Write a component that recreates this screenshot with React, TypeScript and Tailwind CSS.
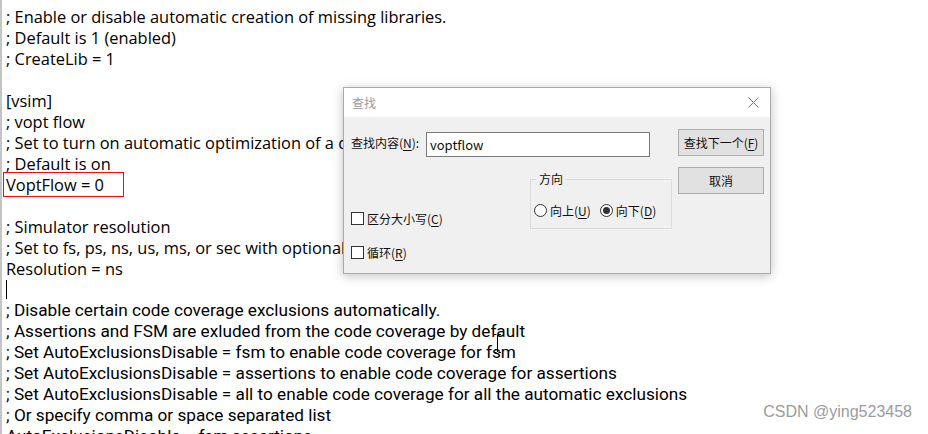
import React from "react";

const topLines = [
  "; Enable or disable automatic creation of missing libraries.",
  "; Default is 1 (enabled)",
  "; CreateLib = 1",
  "",
  "[vsim]",
  "; vopt flow",
  "; Set to turn on automatic optimization of a design.",
  "; Default is on",
];

const midLines = [
  "",
  "; Simulator resolution",
  "; Set to fs, ps, ns, us, ms, or sec with optional prefix of 1, 10, or 100.",
  "Resolution = ns",
];

const bottomLines = [
  "; Disable certain code coverage exclusions automatically.",
  "; Assertions and FSM are exluded from the code coverage by default",
  "; Set AutoExclusionsDisable = fsm to enable code coverage for fsm",
  "; Set AutoExclusionsDisable = assertions to enable code coverage for assertions",
  "; Set AutoExclusionsDisable = all to enable code coverage for all the automatic exclusions",
  "; Or specify comma or space separated list",
  "AutoExclusionsDisable = fsm,assertions",
];

function Line({ text }: { text: string }) {
  return <div className="h-[21px] leading-[21px] whitespace-pre">{text || " "}</div>;
}

function Key({ k }: { k: string }) {
  return <span className="underline underline-offset-2">{k}</span>;
}

function Checkbox({ label, k }: { label: string; k: string }) {
  return (
    <div className="flex items-center h-[13px]">
      <span className="w-[13px] h-[13px] border border-[#333] bg-white shrink-0" />
      <span className="ml-[3px] leading-none">
        {label}(<Key k={k} />)
      </span>
    </div>
  );
}

function Radio({ label, k, checked }: { label: string; k: string; checked?: boolean }) {
  return (
    <div className="flex items-center">
      <span className="w-[13px] h-[13px] rounded-full border border-[#333] bg-white flex items-center justify-center shrink-0">
        {checked && <span className="w-[7px] h-[7px] rounded-full bg-[#333]" />}
      </span>
      <span className="ml-[3px] leading-none">
        {label}(<Key k={k} />)
      </span>
    </div>
  );
}

function FindDialog() {
  return (
    <div
      className="absolute left-[343px] top-[87px] w-[428px] h-[187px] border border-[#aaaaaa] bg-[#f0f0f0] shadow-[0_2px_10px_rgba(0,0,0,0.25)] text-[12px] text-[#111]"
      style={{ fontFamily: '"Noto Sans CJK SC", "Noto Sans", sans-serif' }}
    >
      <div className="h-[29px] bg-white flex items-center justify-between pl-[8px] pr-[10px]">
        <span className="text-[#9a9a9a] text-[12px]">查找</span>
        <svg width="11" height="11" viewBox="0 0 11 11" className="mr-[1px]">
          <path d="M0.5 0.5 L10.5 10.5 M10.5 0.5 L0.5 10.5" stroke="#777" strokeWidth="1" />
        </svg>
      </div>
      <div className="flex">
        <div className="w-[334px] pl-[7px] pt-[15px]">
          <div className="flex items-center h-[25px]">
            <span className="w-[75px] leading-none -mt-[3px]">
              查找内容(<Key k="N" />):
            </span>
            <div className="w-[224px] h-[25px] border border-[#7a7a7a] bg-white flex items-center pl-[3px] text-[13px]">
              voptflow
            </div>
          </div>
          <div className="flex mt-[23px]">
            <div className="w-[179px] pt-[32px] flex flex-col gap-[21px]">
              <Checkbox label="区分大小写" k="C" />
              <Checkbox label="循环" k="R" />
            </div>
            <fieldset className="w-[142px] h-[56px] border border-[#dcdcdc] px-[3px] -mt-[7px]">
              <legend className="ml-[2px] px-[3px] leading-none text-[12px]">方向</legend>
              <div className="flex items-center gap-[9px] mt-[19px]">
                <Radio label="向上" k="U" />
                <Radio label="向下" k="D" checked />
              </div>
            </fieldset>
          </div>
        </div>
        <div className="w-[86px] pt-[12px] flex flex-col gap-[11px]">
          <div className="h-[27px] border border-[#adadad] bg-[#e1e1e1] flex items-center justify-center">
            查找下一个(<Key k="F" />)
          </div>
          <div className="h-[27px] border border-[#adadad] bg-[#e1e1e1] flex items-center justify-center">
            取消
          </div>
        </div>
      </div>
    </div>
  );
}

export default function App() {
  return (
    <div className="relative w-[928px] h-[434px] overflow-hidden bg-white">
      <div
        className="h-full border-l-2 border-[#c4c4c4] pl-[4px] pt-[6px] text-[16.4px] text-black"
        style={{ fontFamily: '"Open Sans", "Noto Sans", sans-serif' }}
      >
        {topLines.map((t, i) => (
          <Line key={i} text={t} />
        ))}
        <div className="relative h-[21px] leading-[21px] whitespace-pre">
          VoptFlow = 0
          <span className="absolute -left-[3px] -top-[2px] w-[121px] h-[25px] border border-[#e81010]" />
        </div>
        {midLines.map((t, i) => (
          <Line key={i} text={t} />
        ))}
        <div className="h-[21px] flex items-center">
          <span className="w-px h-[19px] bg-black" />
        </div>
        <div className="text-[17.2px]" style={{ fontFamily: 'Roboto, "Open Sans", sans-serif' }}>
          {bottomLines.map((t, i) => (
            <Line key={i} text={t} />
          ))}
        </div>
      </div>
      <svg width="7" height="19" viewBox="0 0 7 19" className="absolute left-[494px] top-[334px]">
        <path d="M0 0.5 H2.5 M4.5 0.5 H7 M3.5 1 V18 M0 18.5 H2.5 M4.5 18.5 H7" stroke="#000" strokeWidth="1" />
      </svg>
      <FindDialog />
      <div
        className="absolute right-[16px] bottom-[10px] text-[16px] text-[#9b9b9b]"
        style={{ fontFamily: '"Liberation Sans", Arial, sans-serif' }}
      >
        CSDN @ying523458
      </div>
    </div>
  );
}
